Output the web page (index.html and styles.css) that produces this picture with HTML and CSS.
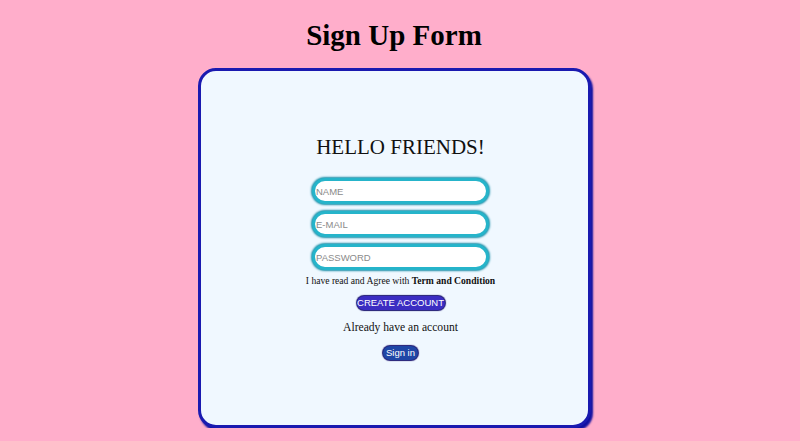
FILE: index.html
```html
<!DOCTYPE html>
<html>
<head>
<meta charset="utf-8">
<link rel="stylesheet" href="styles.css">
</head>
<body>
<h1 class="title">Sign Up Form</h1>
<div class="card">
  <div class="card-inner">
    <h2 class="hello">HELLO FRIENDS!</h2>
    <input class="field" type="text" placeholder="NAME">
    <input class="field" type="text" placeholder="E-MAIL">
    <input class="field field-last" type="password" placeholder="PASSWORD">
    <p class="agree">I have read and Agree with <b>Term and Condition</b></p>
    <button class="btn btn-create">CREATE ACCOUNT</button>
    <p class="already">Already have an account</p>
    <button class="btn btn-signin">Sign in</button>
  </div>
</div>
</body>
</html>
```
FILE: styles.css
```css
html, body {
  margin: 0;
  padding: 0;
}
body {
  background: #ffaecb;
  font-family: "Liberation Serif", "Times New Roman", serif;
  padding: 18px 12px 0 0;
  overflow: hidden;
}
.title {
  margin: 0 0 16px 0;
  text-align: center;
  font-size: 29px;
  line-height: 34px;
  color: #000;
}
.card {
  box-sizing: border-box;
  margin: 0 0 0 198px;
  width: 393px;
  height: 360px;
  background: #f0f8ff;
  border: 3px solid #1a1ab0;
  border-radius: 18px;
  box-shadow: 2px 3px 2px #1010a0;
}
.card-inner {
  padding: 64px 0 0 12px;
  display: flex;
  flex-direction: column;
  align-items: center;
}
.hello {
  margin: 0 0 19px 0;
  font-size: 21px;
  font-weight: normal;
  line-height: 24px;
  color: #111;
}
.field {
  box-sizing: border-box;
  width: 177px;
  height: 26px;
  margin: 0 0 7px 0;
  padding: 0 1px;
  border: 3px solid #26b4ca;
  border-radius: 14px;
  box-shadow: 0 0 2px 1px #1b8fa8;
  background: #fff;
  font-family: "Liberation Sans", Arial, sans-serif;
  font-size: 9.5px;
  outline: none;
}
.field-last {
  margin-bottom: 0;
}
.field::placeholder {
  color: #8a8a8a;
}
.agree {
  margin: 5px 0 9px 0;
  font-size: 9.6px;
  line-height: 12px;
  color: #111;
}
.btn {
  border: none;
  color: #fff;
  font-family: "Liberation Sans", Arial, sans-serif;
  font-size: 9.5px;
  line-height: 14px;
  height: 14px;
  padding: 0;
  white-space: nowrap;
  border-radius: 8px;
  box-shadow: 0 0 1px 1px #1a1470;
}
.btn-create {
  background: #3b2dc2;
  width: 88px;
}
.btn-signin {
  background: #1f46a6;
  width: 35px;
}
.already {
  margin: 11px 0 11px 0;
  font-size: 11.6px;
  line-height: 14px;
  color: #111;
}
```
